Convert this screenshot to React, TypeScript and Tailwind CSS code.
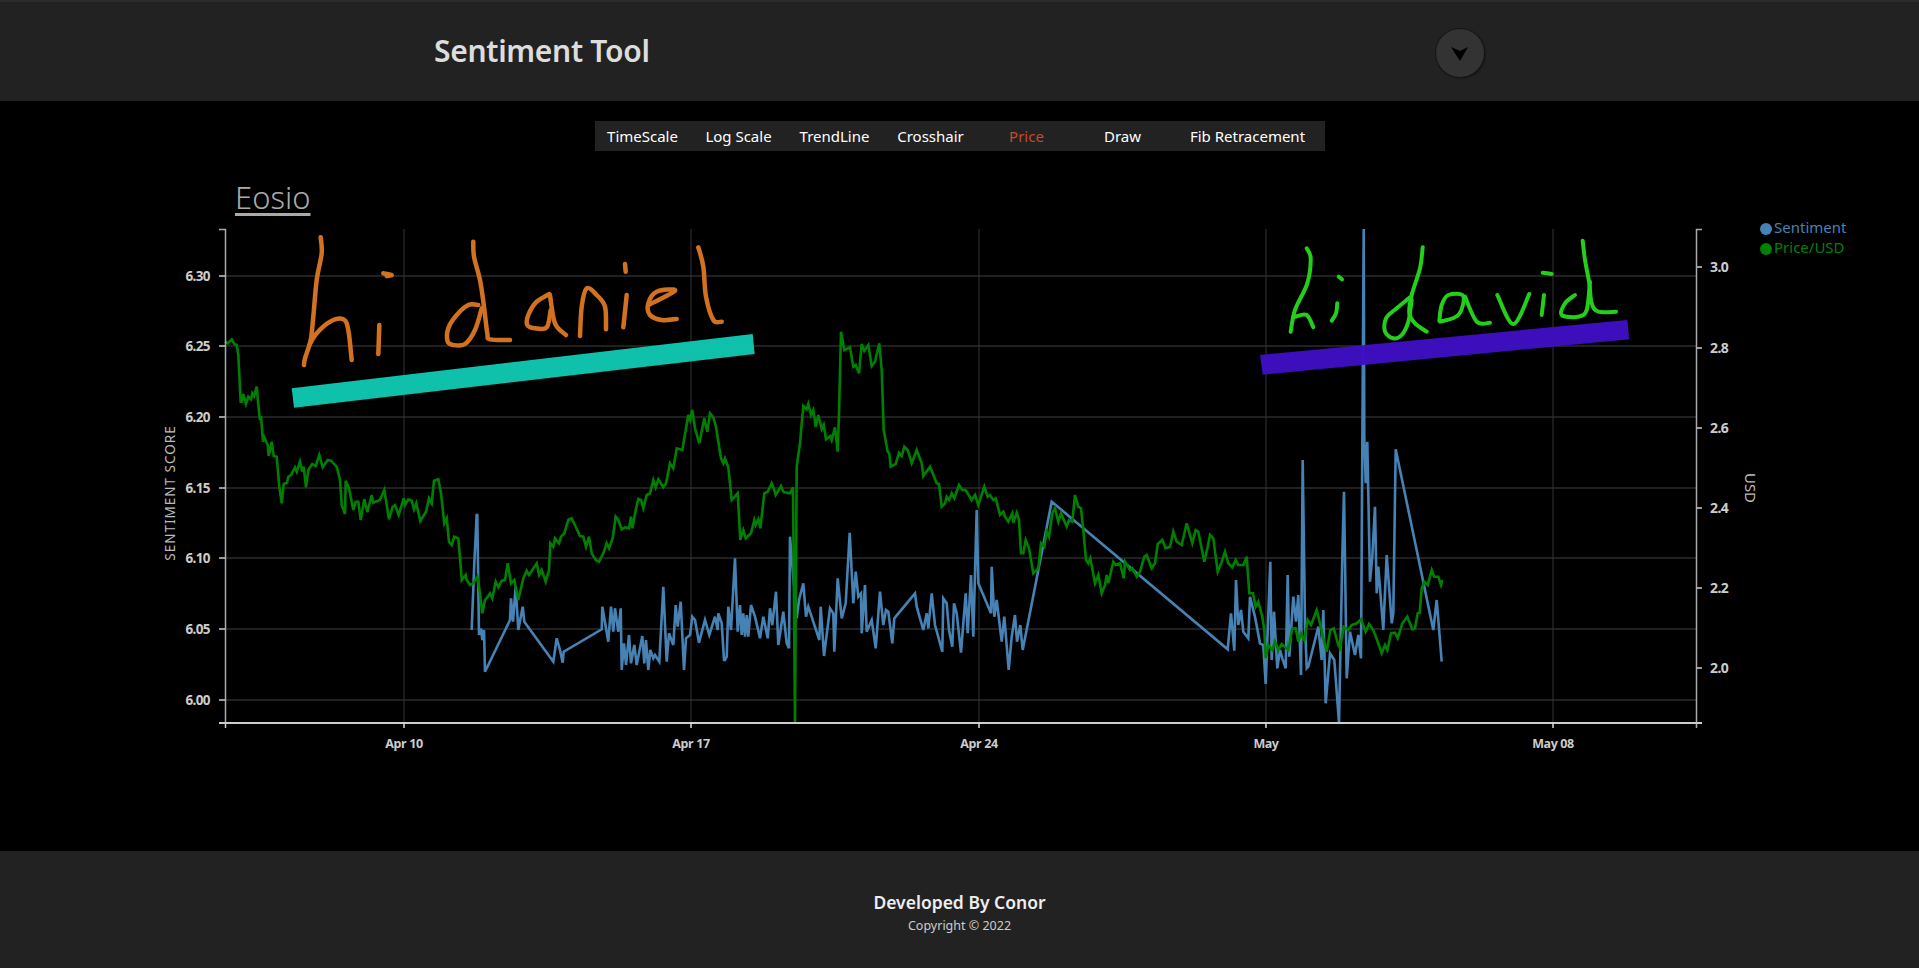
const FONT = "[font-family:'Noto_Sans',sans-serif]";

// traced from the chart, in crop pixels (3x) from the given origin
const toPairs = (raw: string, ox: number, oy: number) =>
  raw
    .trim()
    .split(/\s+/)
    .map((p) => {
      const [x, y] = p.split(',').map(Number);
      return [ox + x / 3, oy + y / 3];
    });

const scale = (raw: string, ox: number, oy: number) =>
  toPairs(raw, ox, oy)
    .map(([x, y]) => `${x.toFixed(1)},${y.toFixed(1)}`)
    .join(' ');

// pen strokes are rounded off a little so they read as hand writing
const smooth = (raw: string, ox: number, oy: number) => {
  const pts = toPairs(raw, ox, oy);
  let d = `M${pts[0][0].toFixed(1)} ${pts[0][1].toFixed(1)}`;
  for (let i = 0; i < pts.length - 1; i++) {
    const p0 = pts[Math.max(i - 1, 0)];
    const p1 = pts[i];
    const p2 = pts[i + 1];
    const p3 = pts[Math.min(i + 2, pts.length - 1)];
    const c1x = p1[0] + (p2[0] - p0[0]) / 6;
    const c1y = p1[1] + (p2[1] - p0[1]) / 6;
    const c2x = p2[0] - (p3[0] - p1[0]) / 6;
    const c2y = p2[1] - (p3[1] - p1[1]) / 6;
    d += `C${c1x.toFixed(1)} ${c1y.toFixed(1)} ${c2x.toFixed(1)} ${c2y.toFixed(1)} ${p2[0].toFixed(1)} ${p2[1].toFixed(1)}`;
  }
  return d;
};

const priceLine = [
  scale(
    `0,35 8,40 20,28 28,42 35,45 40,75 47,215 50,215 55,192 63,222 70,200 78,208 82,190 87,198 95,170 100,225 105,270 108,258 114,335 118,322 128,345 131,378 140,335 146,378 155,380 163,470 170,520 176,462 186,458 190,440 198,435 210,412 215,425 225,395 232,425 236,410 243,472 250,420 262,402 272,408 283,375 293,412 308,390 318,392 335,410 345,450 350,525 360,552 362,452 372,475 385,540 392,515 400,515 407,570 418,508 427,547 440,495 445,518 465,510 478,480 492,568 503,530 510,525 521,555 536,505 540,525 550,508 560,512 567,538 574,520 586,573 603,545 612,505 620,520 627,452 640,448 648,490 658,580 665,565 672,635 680,645 688,620 700,625 708,720 710,750 722,735 725,750 735,765 745,760 757,740 765,790 772,850 780,810 788,800 795,790 802,805 812,755 820,772 830,752 840,750 848,700 858,760 868,750 880,810 895,745 905,722 912,735 935,700 942,735 950,720 962,755 972,720 976,640 985,650 990,625 1002,640 1008,620 1018,610 1030,570 1040,565 1052,590 1065,618 1075,620 1083,650 1092,620 1100,670 1112,690 1122,695 1135,670 1145,640 1152,655 1163,625 1172,560 1180,570 1190,598 1200,592 1212,595 1218,560 1222,595 1232,540 1240,507 1248,510 1255,535 1265,495 1275,490 1285,450 1292,472 1300,448 1315,472 1323,460 1335,400 1345,415 1355,355 1372,360 1390,255 1395,270 1402,240 1410,295 1423,340 1438,265 1447,305 1455,250 1465,262 1473,290 1488,385 1495,400`,
    225,
    330,
  ),
  scale(
    `0,385 10,412 20,510 38,490 46,630 55,600 62,625 78,610 88,570 92,585 100,568 106,595 118,490 128,485 140,460 146,475 152,495 168,468 175,485 190,490 195,490 204,472 210,1178 215,410 225,340 235,228 245,238 250,222 258,255 265,240 272,290 280,255 290,298 296,285 303,328 316,318 320,330 330,292 338,365 342,250 348,5 358,60 375,52 385,110 392,105 402,130 410,42 418,62 430,45 440,108 450,95 463,40 470,120 476,300 488,365 493,370 497,410 512,402 522,368 530,378 538,350 548,360 560,400 575,360 590,400 595,438 615,410 635,460 642,462 650,530 660,520 665,500 672,510 680,490 688,505 702,465 712,480 722,480 740,510 750,495 760,525 778,470 788,500 795,495 805,510 812,505 825,555 835,545 840,560 850,575 862,550 865,578 875,548 882,570 888,670 895,670 902,630 912,655 925,730 940,715 948,640 958,650 965,605 972,620 982,550 990,535 1000,575 1008,550 1025,590 1032,570 1042,575 1050,495 1060,530 1068,535 1075,600 1083,690 1090,700 1096,685 1110,760 1120,735 1130,790 1140,765 1145,735 1150,760 1165,695 1172,705 1185,700 1196,745 1200,695 1215,720 1222,715 1235,740 1245,725 1258,680 1265,675 1280,715 1290,700 1298,642 1312,630 1322,655 1335,650 1345,605 1355,635 1370,645 1385,580 1402,640 1412,600 1420,605 1438,695 1448,650 1455,615 1465,625 1478,725 1490,695`,
    725,
    330,
  ),
  scale(
    `0,665 10,700 22,712 32,690 40,705 55,705 65,680 73,790 84,790 92,830 100,815 112,860 118,900 122,985 130,945 142,960 150,935 160,960 170,942 190,960 202,895 212,895 220,935 228,910 238,930 248,870 258,885 275,840 285,880 295,925 305,965 316,900 326,895 340,945 345,955 356,890 370,900 380,885 395,880 408,868 422,905 432,882 445,900 460,940 470,970 480,945 487,960 498,910 510,908 518,925 532,880 547,860 562,898 570,895 578,850 584,848 590,775 598,755 608,765 620,720 628,740 640,740 648,765 652,750`,
    1225,
    330,
  ),
].join(' ');

const sentimentLine = [
  scale(
    `740,900 748,700 755,555 757,555 762,915 768,895 772,930 777,900 780,1025 855,870 858,805 864,875 872,770 880,900 893,830 898,875 985,995 995,925 1005,960 1013,998 1016,965 1130,898 1132,830 1150,935 1158,830 1165,905 1170,835 1180,905 1187,835 1190,1020 1197,940 1203,1005 1212,915 1218,1000 1228,945 1235,1005 1252,918 1258,1000 1263,930 1270,1020 1276,960 1285,985 1290,975 1303,995 1315,770 1325,995 1332,910 1345,945 1352,825 1358,890 1367,815 1377,1020 1383,925 1395,915 1402,860 1410,870 1422,938 1440,870 1453,915 1470,860 1478,900 1480,850 1490,880 1497,990`,
    225,
    330,
  ),
  scale(
    `0,990 5,980 10,830 18,900 30,685 38,905 45,825 50,915 55,850 60,920 65,855 70,920 78,825 90,860 105,925 115,860 128,925 135,835 142,885 153,785 160,945 175,845 185,940 192,955 195,620 215,865 222,810 235,760 243,860 250,830 283,930 287,830 297,978 315,835 325,850 328,965 338,745 350,865 362,820 374,608 385,820 392,725 400,800 408,790 410,910 420,765 425,905 440,870 452,955 465,785 475,885 483,840 490,845 502,940 508,865 570,790 575,830 595,900 605,850 610,895 620,790 630,885 652,965 655,805 665,820 672,900 682,950 687,820 695,850 708,968 722,790 728,910 738,735 745,920 755,540 760,760 798,850 800,710 808,860 815,810 830,935 838,860 851,1020 860,920 870,855 876,935 886,885 893,960 980,515`,
    725,
    330,
  ),
  scale(
    `8,958 18,850 28,962 33,750 40,885 48,840 55,905 70,925 75,800 90,860 105,940 115,945 122,1062 136,695 140,990 147,845 157,1015 165,960 172,985 182,1015 188,735 193,980 205,800 213,875 220,795 228,1035 233,390 240,880 245,1015 250,1010 270,930 280,890 290,990 295,840 302,1120 315,970 328,990 342,1178 352,680 357,485 365,1045 375,905 390,975 400,915 408,985 416,-303 418,320 422,460 427,335 435,755 442,680 450,530 455,790 460,710 475,900 485,675 500,880 505,850 512,358 625,900 635,810 650,995`,
    1225,
    330,
  ),
].join(' ');

const danielStrokes = [
  '122,52 125,100 110,180 100,290 92,360 75,415 72,435',
  '88,375 110,340 150,305 190,298 205,330 215,420',
  '298,315 295,402',
  '310,160 335,165 320,168',
  '580,65 582,110 600,180 612,260 622,340 630,358 690,360',
  '595,255 565,255 530,285 505,325 503,365 520,375 555,372 585,330 605,265',
  '808,222 770,245 745,285 742,315 765,325 800,322 812,270',
  '810,225 825,310 858,345',
  '900,348 905,260 920,205 950,225 975,260 978,328',
  '1040,225 1030,322',
  '1035,132 1037,155',
  '1105,255 1185,212 1130,215 1105,250 1110,285 1145,300 1190,297',
  '1255,82 1270,140 1278,230 1300,300 1325,305',
];

const davidStrokes = [
  '170,85 182,115 172,190 135,270 122,335',
  '135,290 170,285 190,322',
  '262,250 258,280 245,302',
  '266,170 276,178',
  '518,82 510,145 485,225 478,280 495,310 530,335',
  '480,232 440,265 408,295 405,335 430,355 455,345 475,305 485,240',
  '568,302 575,255 595,225 640,228 625,285 570,305',
  '645,230 680,305 720,308',
  '742,225 790,312 838,222',
  '882,225 875,285',
  '878,158 905,162',
  '998,62 1005,120 1018,190 1025,250 1045,275 1098,275',
  '975,225 945,250 935,285 985,290 1010,270 1020,185',
];

const gridY = [276, 346, 417, 488, 558, 629, 700];
const leftLabels = ['6.30', '6.25', '6.20', '6.15', '6.10', '6.05', '6.00'];
const gridX = [404, 691, 979, 1266, 1553];
const dateLabels = ['Apr 10', 'Apr 17', 'Apr 24', 'May', 'May 08'];
const rightTicks = [
  { y: 267, label: '3.0' },
  { y: 348, label: '2.8' },
  { y: 428, label: '2.6' },
  { y: 508, label: '2.4' },
  { y: 588, label: '2.2' },
  { y: 668, label: '2.0' },
];

const tools = [
  { label: 'TimeScale', width: 'w-24' },
  { label: 'Log Scale', width: 'w-24' },
  { label: 'TrendLine', width: 'w-24' },
  { label: 'Crosshair', width: 'w-24' },
  { label: 'Price', width: 'w-24', active: true },
  { label: 'Draw', width: 'w-24' },
  { label: 'Fib Retracement', width: 'w-[154px]' },
];

const Chart = () => (
  <svg viewBox="0 210 1919 550" className="block w-[1919px] h-[550px]">
    {gridY.map((y) => (
      <line key={y} x1={225} x2={1697} y1={y} y2={y} stroke="#2b2b2b" strokeWidth={1.5} />
    ))}
    {gridX.map((x) => (
      <line key={x} x1={x} x2={x} y1={229} y2={723} stroke="#343434" />
    ))}

    <polyline points={sentimentLine} fill="none" stroke="#4682b4" strokeWidth={2.6} />
    <polyline points={priceLine} fill="none" stroke="#008000" strokeWidth={2.6} />

    {/* left axis */}
    <path d="M219 229.5H225.5V723" fill="none" stroke="#aaa" strokeWidth={1.5} />
    {gridY.map((y, i) => (
      <g key={y}>
        <line x1={219} x2={225} y1={y} y2={y} stroke="#ccc" strokeWidth={1.5} />
        <text x={210} y={y + 4.5} textAnchor="end" fill="#ccc" fontSize={13.5} fontWeight={700} letterSpacing={-0.6}>
          {leftLabels[i]}
        </text>
      </g>
    ))}
    <text
      transform="translate(175 493) rotate(-90)"
      textAnchor="middle"
      fill="#bbb"
      fontSize={13.5}
      letterSpacing={1}
    >
      SENTIMENT SCORE
    </text>

    {/* right axis */}
    <path d="M1702 229.5H1696.5V728" fill="none" stroke="#aaa" strokeWidth={1.5} />
    {rightTicks.map((t) => (
      <g key={t.y}>
        <line x1={1697} x2={1702} y1={t.y} y2={t.y} stroke="#ccc" strokeWidth={1.5} />
        <text x={1710} y={t.y + 5} fill="#ccc" fontSize={14} fontWeight={700} letterSpacing={-0.6}>
          {t.label}
        </text>
      </g>
    ))}
    <text transform="translate(1745 488) rotate(90)" textAnchor="middle" fill="#bbb" fontSize={15}>
      USD
    </text>

    {/* bottom axis */}
    <line x1={219} x2={1702} y1={723} y2={723} stroke="#ccc" strokeWidth={2} />
    <line x1={225.5} x2={225.5} y1={723} y2={728} stroke="#ccc" strokeWidth={1.5} />
    {gridX.map((x, i) => (
      <g key={x}>
        <line x1={x} x2={x} y1={723} y2={728} stroke="#ddd" strokeWidth={1.5} />
        <text x={x} y={748} textAnchor="middle" fill="#ccc" fontSize={12.5} fontWeight={700} letterSpacing={-0.4}>
          {dateLabels[i]}
        </text>
      </g>
    ))}

    {/* legend */}
    <circle cx={1766} cy={229} r={6} fill="#4682b4" />
    <circle cx={1766} cy={249} r={6} fill="#008000" />
    <text x={1774} y={233} fill="#4682b4" fontSize={15}>
      Sentiment
    </text>
    <text x={1774} y={253} fill="#008000" fontSize={15}>
      Price/USD
    </text>

    {/* hand drawn notes */}
    {danielStrokes.map((s) => (
      <path
        key={s}
        d={smooth(s, 280, 220)}
        fill="none"
        stroke="#d2711f"
        strokeWidth={4.5}
        strokeLinejoin="round"
        strokeLinecap="round"
      />
    ))}
    <polygon points={scale('35,505 1418,342 1424,402 42,563', 280, 220)} fill="#0fc6b0" fillOpacity={0.97} />
    {davidStrokes.map((s) => (
      <path
        key={s}
        d={smooth(s, 1250, 220)}
        fill="none"
        stroke="#24cf1c"
        strokeWidth={4}
        strokeLinejoin="round"
        strokeLinecap="round"
      />
    ))}
    <polygon points={scale('30,405 1132,300 1138,358 38,464', 1250, 220)} fill="#3e0ec2" fillOpacity={0.97} />
  </svg>
);

const App = () => {
  return (
    <div className={`${FONT} flex h-[968px] w-full flex-col overflow-hidden bg-black`}>
      <header className="flex h-[101px] shrink-0 items-center border-t-2 border-[#2c2c2c] bg-[#222222] pl-[434px]">
        <h1 className="mb-[2px] w-[1002px] text-[30px] font-semibold tracking-[-0.3px] text-[#dddddd]">Sentiment Tool</h1>
        <button className="mt-[2px] flex h-12 w-12 items-center justify-center rounded-full bg-[#333333] shadow-[0_0_0_1px_#161616,1px_1px_2px_#0c0c0c]">
          <svg width="20" height="18" viewBox="0 0 20 18">
            <path d="M1 3 10 7 18 3 10 17Z" fill="#000" />
          </svg>
        </button>
      </header>

      <main className="flex flex-1 flex-col">
        <nav className="mx-auto mt-5 flex h-[30px] w-[730px] items-center bg-[#222222]">
          {tools.map((tool) => (
            <span
              key={tool.label}
              className={`${tool.width} text-center text-[15px] ${tool.active ? 'text-[#c04d2c]' : 'text-white'}`}
            >
              {tool.label}
            </span>
          ))}
        </nav>
        <h2 className="mt-[25px] ml-[235px] h-[34px] text-[31px] font-light leading-[43px] text-[#aaaaaa] underline underline-offset-[4px]">
          Eosio
        </h2>
        <Chart />
      </main>

      <footer className="flex h-[117px] shrink-0 flex-col items-center bg-[#222222] pt-[37px]">
        <p className="text-[17.5px] font-semibold leading-7 text-[#eeeeee]">Developed By Conor</p>
        <p className="text-[12.5px] leading-5 text-[#cccccc]">Copyright © 2022</p>
      </footer>
    </div>
  );
};

export default App;
